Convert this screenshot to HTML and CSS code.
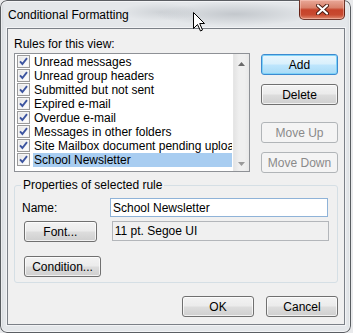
FILE: index.html
```html
<!DOCTYPE html>
<html>
<head>
<meta charset="utf-8">
<link rel="stylesheet" href="styles.css">
</head>
<body>
<div class="window">
  <div class="titlebar">
    <span class="title">Conditional Formatting</span>
    <div class="close">
      <svg width="13" height="11" viewBox="0 0 13 11"><path d="M2 1.5 L11 9.5 M11 1.5 L2 9.5" stroke="#4a1a10" stroke-width="4" stroke-linecap="round"/><path d="M2 1.5 L11 9.5 M11 1.5 L2 9.5" stroke="#ffffff" stroke-width="2.2" stroke-linecap="round"/></svg>
    </div>
  </div>
  <div class="client">
    <div class="top">
      <div class="rules">
        <div class="label">Rules for this view:</div>
        <div class="listbox">
          <ul class="items">
            <li class="item"><span class="cb"><svg width="13" height="13" viewBox="0 0 13 13"><path d="M3 6.3 L5.4 9 L10 3.2" fill="none" stroke="#3d55a0" stroke-width="1.9"/></svg></span><span class="text">Unread messages</span></li>
            <li class="item"><span class="cb"><svg width="13" height="13" viewBox="0 0 13 13"><path d="M3 6.3 L5.4 9 L10 3.2" fill="none" stroke="#3d55a0" stroke-width="1.9"/></svg></span><span class="text">Unread group headers</span></li>
            <li class="item"><span class="cb"><svg width="13" height="13" viewBox="0 0 13 13"><path d="M3 6.3 L5.4 9 L10 3.2" fill="none" stroke="#3d55a0" stroke-width="1.9"/></svg></span><span class="text">Submitted but not sent</span></li>
            <li class="item"><span class="cb"><svg width="13" height="13" viewBox="0 0 13 13"><path d="M3 6.3 L5.4 9 L10 3.2" fill="none" stroke="#3d55a0" stroke-width="1.9"/></svg></span><span class="text">Expired e-mail</span></li>
            <li class="item"><span class="cb"><svg width="13" height="13" viewBox="0 0 13 13"><path d="M3 6.3 L5.4 9 L10 3.2" fill="none" stroke="#3d55a0" stroke-width="1.9"/></svg></span><span class="text">Overdue e-mail</span></li>
            <li class="item"><span class="cb"><svg width="13" height="13" viewBox="0 0 13 13"><path d="M3 6.3 L5.4 9 L10 3.2" fill="none" stroke="#3d55a0" stroke-width="1.9"/></svg></span><span class="text">Messages in other folders</span></li>
            <li class="item"><span class="cb"><svg width="13" height="13" viewBox="0 0 13 13"><path d="M3 6.3 L5.4 9 L10 3.2" fill="none" stroke="#3d55a0" stroke-width="1.9"/></svg></span><span class="text">Site Mailbox document pending upload</span></li>
            <li class="item"><span class="cb"><svg width="13" height="13" viewBox="0 0 13 13"><path d="M3 6.3 L5.4 9 L10 3.2" fill="none" stroke="#3d55a0" stroke-width="1.9"/></svg></span><span class="text selected">School Newsletter</span></li>
          </ul>
          <div class="scrollbar">
            <svg class="arrow" width="7" height="4" viewBox="0 0 7 4"><path d="M3.5 0 L7 4 L0 4 Z" fill="#6a6a6a"/></svg>
            <svg class="arrow" width="7" height="4" viewBox="0 0 7 4"><path d="M0 0 L7 0 L3.5 4 Z" fill="#9a9a9a"/></svg>
          </div>
        </div>
      </div>
      <div class="side">
        <div class="btn default">Add</div>
        <div class="btn gap-s">Delete</div>
        <div class="btn disabled gap-l">Move Up</div>
        <div class="btn disabled gap-s">Move Down</div>
      </div>
    </div>
    <fieldset class="props">
      <legend class="legend">Properties of selected rule</legend>
      <div class="row">
        <span class="name-label">Name:</span>
        <div class="input">School Newsletter</div>
      </div>
      <div class="row row-font">
        <div class="btn font-btn">Font...</div>
        <div class="field">11 pt. Segoe UI</div>
      </div>
      <div class="row row-cond">
        <div class="btn cond-btn">Condition...</div>
      </div>
    </fieldset>
    <div class="footer">
      <div class="btn dlg-btn">OK</div>
      <div class="btn dlg-btn">Cancel</div>
    </div>
  </div>
  <svg class="cursor" width="13" height="20" viewBox="0 0 13 20"><path d="M0.5 0.5 L0.5 16.5 L4.5 12.5 L7.5 19 L9.5 18 L6.7 11.5 L11.5 11.5 Z" fill="#ffffff" stroke="#000000" stroke-width="1" stroke-linejoin="miter"/></svg>
</div>
</body>
</html>
```

FILE: styles.css
```css
* { box-sizing: border-box; }

html, body {
  margin: 0;
  padding: 0;
}

body {
  width: 353px;
  height: 333px;
  background: #e9eaec;
  font-family: "Liberation Sans", Arial, sans-serif;
  font-size: 12px;
  line-height: 14px;
  color: #000;
  overflow: hidden;
}

.window {
  position: relative;
  width: 351px;
  height: 333px;
  border-radius: 7px;
  background:
    radial-gradient(ellipse 80px 12px at 235px 14px, rgba(110, 118, 128, 0.28), rgba(110, 118, 128, 0) 100%),
    radial-gradient(ellipse 40px 9px at 160px 12px, rgba(110, 118, 128, 0.18), rgba(110, 118, 128, 0) 100%),
    linear-gradient(to right, #c9cdd2 0px, #e4e7ea 4px, #e4e7ea 347px, #d3d7db 351px),
    #e2e5e8;
  box-shadow: inset 0 0 0 1px rgba(40, 44, 50, 0.75), inset 0 0 0 2px rgba(255, 255, 255, 0.55);
  display: flex;
  flex-direction: column;
  padding: 0 6px 0 7px;
}

.titlebar {
  height: 28px;
  display: flex;
  align-items: flex-start;
  flex-shrink: 0;
}

.title {
  padding-top: 8px;
  padding-left: 1px;
  color: #000;
}

.close {
  margin-left: auto;
  width: 46px;
  height: 20px;
  border: 1px solid rgba(70, 20, 12, 0.75);
  border-top: none;
  border-radius: 0 0 5px 5px;
  background: linear-gradient(#e9a898 0%, #d9826c 40%, #c6432a 52%, #c84a30 78%, #df8a70 100%);
  box-shadow: inset 0 0 0 1px rgba(255, 210, 200, 0.45);
  display: flex;
  align-items: center;
  justify-content: center;
  padding-bottom: 1px;
}

.close svg { display: block; }

.client {
  height: 297px;
  background: #f0f0f0;
  border: 1px solid #7b8087;
  box-shadow: 0 0 0 1px rgba(255, 255, 255, 0.5);
  padding: 8px 6px 7px 6px;
  display: flex;
  flex-direction: column;
}

.top {
  display: flex;
  gap: 11px;
  height: 136px;
}

.rules {
  width: 236px;
  display: flex;
  flex-direction: column;
}

.label {
  height: 14px;
  margin-bottom: 2px;
}

.listbox {
  height: 119px;
  border: 1px solid #8e9196;
  background: #fff;
  display: flex;
}

.items {
  list-style: none;
  margin: 0;
  padding: 1px 0 0 0;
  flex: 1;
  min-width: 0;
}

.item {
  display: flex;
  height: 14px;
}

.cb {
  width: 13px;
  height: 13px;
  margin: 0 3px 0 2px;
  flex-shrink: 0;
  border: 1px solid #9b9b9b;
  background: linear-gradient(135deg, #e1e1e1 0%, #f7f7f7 60%, #ffffff 100%);
  box-shadow: inset 0 0 0 1px #f4f4f4;
  position: relative;
}

.cb svg {
  display: block;
  margin: -1px 0 0 -1px;
}

.text {
  flex: 1;
  min-width: 0;
  margin-right: 1px;
  padding-left: 1px;
  white-space: nowrap;
  overflow: hidden;
}

.text.selected {
  background: #a8cdf1;
}

.scrollbar {
  width: 16px;
  flex-shrink: 0;
  background: linear-gradient(to right, #e4e4e4 0%, #efefef 35%, #efefef 70%, #e8e8e8 100%);
  border-left: 1px solid #e6e6e6;
  display: flex;
  flex-direction: column;
  align-items: center;
  justify-content: space-between;
  padding: 8px 0 5px 0;
}

.arrow { display: block; }

.side {
  width: 77px;
  display: flex;
  flex-direction: column;
  padding-top: 17px;
}

.btn {
  height: 21px;
  border: 1px solid #707070;
  border-radius: 3px;
  background: linear-gradient(#f3f3f3 0%, #ebebeb 48%, #dddddd 52%, #cfcfcf 100%);
  box-shadow: inset 0 0 0 1px rgba(255, 255, 255, 0.7);
  display: flex;
  align-items: center;
  justify-content: center;
  color: #000;
  white-space: nowrap;
}

.btn.default {
  border-color: #3c8ad0;
  background: linear-gradient(#e9f6fd 0%, #d9f0fc 48%, #bee6fd 52%, #a9dbf6 100%);
  box-shadow: inset 0 0 0 1px #7fd2f7;
}

.btn.disabled {
  border-color: #b1b5b8;
  background: #f4f4f4;
  box-shadow: none;
  color: #8a8a8a;
}

.gap-s { margin-top: 9px; }
.gap-l { margin-top: 17px; }

.props {
  margin: 5px 0 0 0;
  padding: 6px 8px 5px 9px;
  border: 1px solid #d5dfe5;
  border-radius: 3px;
  min-width: 0;
  height: 105px;
}

.legend {
  padding: 0 2px;
  margin-left: -3px;
  line-height: 14px;
}

.row {
  display: flex;
  align-items: center;
}

.name-label {
  width: 88px;
  margin-left: -2px;
  padding-right: 2px;
  flex-shrink: 0;
}

.input {
  width: 218px;
  height: 19px;
  border: 1px solid #8fb3d8;
  background: #fff;
  padding-left: 2px;
  display: flex;
  align-items: center;
}

.row-font {
  margin-top: 4px;
  align-items: flex-start;
}

.font-btn {
  width: 73px;
  margin-right: 15px;
}

.field {
  width: 218px;
  height: 20px;
  border: 1px solid #b3b6ba;
  background: #f0f0f0;
  padding-left: 2px;
  display: flex;
  align-items: center;
}

.row-cond {
  margin-top: 14px;
}

.cond-btn {
  width: 77px;
}

.footer {
  margin-top: 13px;
  display: flex;
  justify-content: flex-end;
  gap: 12px;
}

.dlg-btn {
  width: 72px;
}

.cursor {
  position: absolute;
  left: 193px;
  top: 12px;
  display: block;
}
```
